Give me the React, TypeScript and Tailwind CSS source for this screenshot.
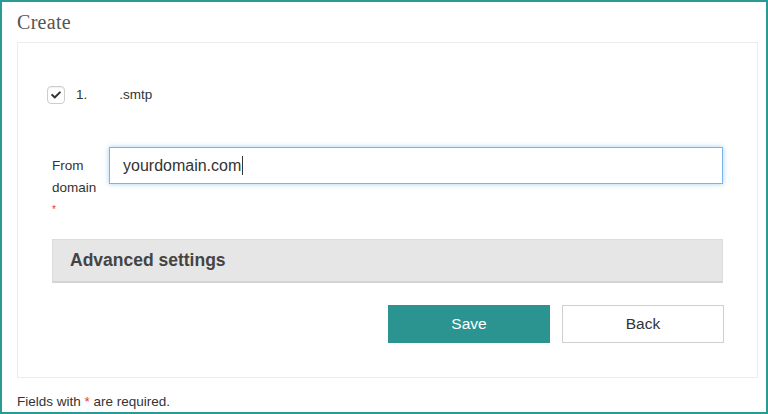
import { FaCheck } from "react-icons/fa"

export default function App() {
  return (
    <div className="w-[768px] h-[414px] bg-white font-['Liberation_Sans',Arial,sans-serif] text-[#333]">
      <div className="w-[768px] h-[414px] border-2 border-[#2a9a94] pl-[15px] pr-[8px] flex flex-col">
        <div className="h-[40px] flex items-center">
          <h1 className="font-['Liberation_Serif','Times_New_Roman',serif] text-[20px] text-[#555] tracking-[0.3px]">Create</h1>
        </div>

        <div className="border border-[#ececec] pt-[43px] pb-[34px] px-[34px]">
          <div className="flex items-center -ml-[5px] h-[18px]">
            <span className="w-[18px] h-[18px] rounded-[4px] border border-[#cdcdcd] flex items-center justify-center shadow-[inset_0_1px_1px_rgba(0,0,0,0.06)]">
              <FaCheck className="w-[10px] h-[10px] text-[#333]" />
            </span>
            <span className="ml-[11px] text-[13.5px]">1.</span>
            <span className="ml-[32px] text-[13.5px]">.smtp</span>
          </div>

          <div className="flex items-start mt-[43px]">
            <div className="w-[57px] pt-[8px] text-[13.5px] leading-[22px]">
              <div>From</div>
              <div>domain</div>
              <div className="text-[#e33] text-[10px]">*</div>
            </div>
            <div className="flex-1 h-[37px] border border-[#78b4ea] shadow-[0_0_5px_rgba(102,175,233,0.6)] flex items-center px-[13px] text-[16px] text-[#333]">
              yourdomain.com
              <span className="w-px h-[19px] bg-[#333] ml-px" />
            </div>
          </div>

          <div className="mt-[18px] h-[44px] bg-[#e6e6e6] border border-[#dcdcdc] border-b-2 border-b-[#d3d3d3] flex items-center pl-[17px]">
            <span className="font-bold text-[17.5px] text-[#444]">Advanced settings</span>
          </div>

          <div className="flex justify-end gap-[12px] mt-[22px]">
            <button className="w-[162px] h-[38px] bg-[#2b9490] text-white text-[15.5px]">Save</button>
            <button className="w-[162px] h-[38px] bg-white border border-[#cfcfcf] text-[#333] text-[15.5px] -mr-px">Back</button>
          </div>
        </div>

        <div className="mt-[15px] text-[13.5px] leading-[18px] text-[#333]">
          Fields with <span className="text-[#e33]">*</span> are required.
        </div>
      </div>
    </div>
  )
}
